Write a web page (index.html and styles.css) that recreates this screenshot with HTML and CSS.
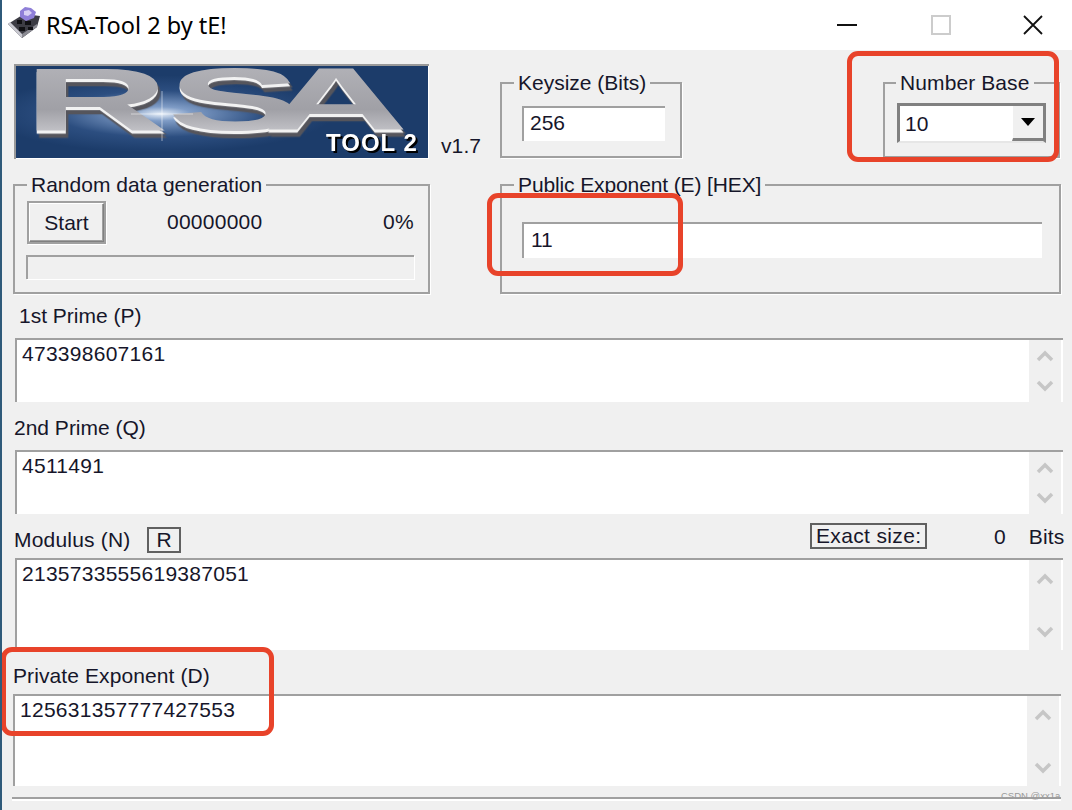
FILE: index.html
```html
<!DOCTYPE html>
<html lang="en">
  <head>
    <meta charset="UTF-8" />
    <meta name="viewport" content="width=device-width, initial-scale=1.0" />
    <title>RSA-Tool 2 by tE!</title>
    <link rel="stylesheet" href="styles.css">
  </head>
  <body>
    <div class="window">
      <header class="titlebar">
        <svg class="app-icon" viewBox="0 0 34 32" width="34" height="32">
          <polygon points="1,17 17,7 33,9 30,20 15,31" fill="#3c3c44" />
          <polygon points="1,17 15,31 15,27 3,15" fill="#c8c8d0" />
          <polygon points="15,31 30,20 30,17 15,27" fill="#8a8a92" />
          <polygon points="13,4 18,0 24,1 29,5 27,11 19,14 13,10" fill="#8f7fd8" />
          <polygon points="17,4 22,3 25,6 21,9 17,8" fill="#d8d0f4" />
          <g fill="#101014">
            <rect x="10" y="13" width="5" height="4" />
            <rect x="18" y="14" width="6" height="4" />
            <rect x="12" y="20" width="6" height="4" />
            <rect x="21" y="20" width="5" height="3" />
          </g>
        </svg>
        <span class="title">RSA-Tool 2 by tE!</span>
        <div class="controls">
          <svg width="22" height="20" viewBox="0 0 22 20"><path d="M1 10h20" stroke="#111" stroke-width="2" /></svg>
          <svg width="20" height="20" viewBox="0 0 20 20"><rect x="1" y="1" width="18" height="18" fill="none" stroke="#ccc" stroke-width="2" /></svg>
          <svg width="20" height="20" viewBox="0 0 20 20"><path d="M1 1l18 18M19 1L1 19" stroke="#111" stroke-width="1.8" /></svg>
        </div>
      </header>

      <main class="panel">
        <div class="row-top">
          <div class="logo">
            <svg viewBox="0 0 412 92" width="412" height="92">
              <defs>
                <radialGradient id="glow" cx="0.35" cy="0.52" r="0.42">
                  <stop offset="0" stop-color="#e6eef8" />
                  <stop offset="0.18" stop-color="#7f9cc6" />
                  <stop offset="0.6" stop-color="#2c4e80" />
                  <stop offset="1" stop-color="#1c3c6a" />
                </radialGradient>
                <linearGradient id="metal" x1="0" y1="0" x2="0" y2="1">
                  <stop offset="0" stop-color="#b8b8bd" />
                  <stop offset="0.6" stop-color="#a0a0a6" />
                  <stop offset="1" stop-color="#dcdce0" />
                </linearGradient>
              </defs>
              <rect width="412" height="92" fill="url(#glow)" />
              <text class="logo-rsa" x="3 63 103" y="61" transform="scale(2.4 1.05)" fill="url(#metal)">RSA</text>
              <path d="M146 25v50M115 48h62" stroke="#fff" stroke-opacity="0.5" />
              <text class="logo-tool" x="310" y="85" fill="#fff">TOOL 2</text>
            </svg>
          </div>
          <span class="version">v1.7</span>

          <fieldset class="group keysize">
            <legend>Keysize (Bits)</legend>
            <div class="group-body">
              <div class="edit">256</div>
            </div>
          </fieldset>

          <fieldset class="group numbase">
            <legend>Number Base</legend>
            <div class="group-body">
              <div class="combo">
                <span class="combo-value">10</span>
                <span class="combo-btn"><i></i></span>
              </div>
            </div>
          </fieldset>
        </div>

        <div class="row-mid">
          <fieldset class="group random">
            <legend>Random data generation</legend>
            <div class="group-body">
              <div class="random-line">
                <button class="btn-start">Start</button>
                <span class="counter">00000000</span>
                <span class="percent">0%</span>
              </div>
              <div class="progress"></div>
            </div>
          </fieldset>

          <fieldset class="group pubexp">
            <legend>Public Exponent (E) [HEX]</legend>
            <div class="group-body">
              <div class="edit">11</div>
            </div>
          </fieldset>
        </div>

        <div class="label prime-p">1st Prime (P)</div>
        <div class="memo short">
          <div class="memo-text">473398607161</div>
          <div class="scroll">
            <svg width="18" height="14" viewBox="0 0 18 14"><path d="M2 11l7-7 7 7" /></svg>
            <svg width="18" height="14" viewBox="0 0 18 14"><path d="M2 3l7 7 7-7" /></svg>
          </div>
        </div>

        <div class="label prime-q">2nd Prime (Q)</div>
        <div class="memo short">
          <div class="memo-text">4511491</div>
          <div class="scroll">
            <svg width="18" height="14" viewBox="0 0 18 14"><path d="M2 11l7-7 7 7" /></svg>
            <svg width="18" height="14" viewBox="0 0 18 14"><path d="M2 3l7 7 7-7" /></svg>
          </div>
        </div>

        <div class="modulus-row">
          <span class="modulus-label">Modulus (N)</span>
          <button class="btn-r">R</button>
          <span class="exact">Exact size:</span>
          <span class="exact-num">0</span>
          <span class="exact-unit">Bits</span>
        </div>
        <div class="memo tall">
          <div class="memo-text">2135733555619387051</div>
          <div class="scroll">
            <svg width="18" height="14" viewBox="0 0 18 14"><path d="M2 11l7-7 7 7" /></svg>
            <svg width="18" height="14" viewBox="0 0 18 14"><path d="M2 3l7 7 7-7" /></svg>
          </div>
        </div>

        <div class="label private-d">Private Exponent (D)</div>
        <div class="memo tall last">
          <div class="memo-text">125631357777427553</div>
          <div class="scroll">
            <svg width="18" height="14" viewBox="0 0 18 14"><path d="M2 11l7-7 7 7" /></svg>
            <svg width="18" height="14" viewBox="0 0 18 14"><path d="M2 3l7 7 7-7" /></svg>
          </div>
        </div>

        <div class="rule"></div>
      </main>

      <!-- red annotation boxes -->
      <div class="mark mark-base"></div>
      <div class="mark mark-pub"></div>
      <div class="mark mark-priv"></div>
      <div class="watermark">CSDN @xx1a</div>
    </div>
  </body>
</html>
```

FILE: styles.css
```css
* {
  margin: 0;
  padding: 0;
  box-sizing: border-box;
}
body,
html {
  width: 100%;
  height: 100%;
  overflow: hidden;
}
body {
  font-family: "Liberation Sans", Arial, sans-serif;
  font-size: 21px;
  color: #16162a;
}

.window {
  position: relative;
  width: 1072px;
  height: 810px;
  background: #f0f0f0;
  border-left: 2px solid #2f5a7a;
  overflow: hidden;
}

/* TITLE BAR */
.titlebar {
  height: 50px;
  background: #fff;
  display: flex;
  align-items: center;
  padding: 0 29px 0 5px;
}
.app-icon {
  margin-bottom: 5px;
}
.title {
  margin-left: 5px;
  font-family: "Noto Sans", sans-serif;
  font-size: 23.5px;
  color: #000;
}
.controls {
  margin-left: auto;
  display: flex;
  align-items: center;
  gap: 72.5px;
}

/* PANEL */
.panel {
  padding: 14px 0 0 12px;
}
.row-top {
  display: flex;
  align-items: flex-start;
  height: 95px;
}
.logo {
  width: 415px;
  height: 95px;
  border-top: 2px solid #999;
  border-left: 2px solid #999;
  background: #fff;
  flex: none;
}
.logo svg {
  display: block;
}
.logo-rsa {
  font-family: "Liberation Sans", sans-serif;
  font-weight: bold;
  font-size: 84px;
  filter: drop-shadow(0 3px 0 #f2f2f2) drop-shadow(1px 4px 0 #55555c);
}
.logo-tool {
  font-family: "Liberation Sans", sans-serif;
  font-weight: bold;
  font-size: 24px;
  letter-spacing: 1px;
  filter: drop-shadow(2px 2px 0 #000);
}
.version {
  margin: 70px 0 0 12px;
  width: 40px;
  flex: none;
  line-height: 24px;
  white-space: nowrap;
  letter-spacing: 0.1px;
}

/* GROUP BOXES */
.group {
  border: 2px solid #a0a0a0;
  box-shadow: 1px 1px 0 #fff;
  flex: none;
  min-width: 0;
}
.group legend {
  margin-left: 12px;
  padding: 0 4px;
  line-height: 24px;
  white-space: nowrap;
}
.keysize {
  margin: 7px 0 0 19px;
  width: 182px;
  height: 87px;
}
.keysize .group-body {
  padding: 11px 15px 0 20px;
}
.numbase {
  margin: 7px 0 0 201px;
  width: 177px;
  height: 87px;
}
.numbase .group-body {
  padding: 8px 12px 0 12px;
}
.numbase legend {
  margin-left: 11px;
  letter-spacing: 0.1px;
}
.edit {
  background: #fff;
  border-top: 2px solid #a0a0a0;
  border-left: 2px solid #a0a0a0;
  height: 35px;
  line-height: 30px;
  padding-left: 6px;
}
.combo {
  display: flex;
  height: 40px;
  background: #fff;
  border: 3px solid #808080;
  border-bottom: 2px solid #e6e6e6;
}
.combo-value {
  flex: 1;
  line-height: 36px;
  padding-left: 5px;
}
.combo-btn {
  width: 31px;
  background: #f0f0f0;
  display: flex;
  align-items: center;
  justify-content: center;
  border-left: 1px solid #fff;
  border-bottom: 3px solid #808080;
}
.combo-btn i {
  width: 0;
  height: 0;
  border-left: 7px solid transparent;
  border-right: 7px solid transparent;
  border-top: 8px solid #000;
}

.row-mid {
  display: flex;
  margin-top: 14px;
}
.random {
  margin-left: -1px;
  width: 417px;
  height: 121px;
}
.random .group-body {
  padding: 4px 14px 0 12px;
}
.random-line {
  display: flex;
  align-items: center;
  line-height: 22px;
}
.btn-start {
  width: 79px;
  height: 43px;
  background: #f0f0f0;
  border: 3px solid;
  border-color: #fff #808080 #808080 #fff;
  outline: 2px solid #a0a0a0;
  outline-offset: -2px;
  box-shadow: inset -1px -1px 0 #a0a0a0, 1px 1px 0 #fff;
  font: inherit;
  color: inherit;
}
.counter {
  margin-left: 61px;
  margin-top: -2px;
  letter-spacing: 0.25px;
}
.percent {
  margin-left: auto;
  margin-top: -2px;
  letter-spacing: 0.3px;
}
.progress {
  margin: 11px 0 0 -1px;
  height: 24px;
  border-top: 2px solid #a0a0a0;
  border-left: 2px solid #a0a0a0;
  box-shadow: 1px 1px 0 #fff;
}
.pubexp {
  margin-left: 70px;
  width: 561px;
  height: 121px;
}
.pubexp .group-body {
  padding: 25px 17px 0 20px;
}
.pubexp .edit {
  height: 36px;
  line-height: 32px;
  padding-left: 7px;
}
.pubexp legend {
  letter-spacing: -0.12px;
}

/* FIELD LABELS */
.label {
  line-height: 24px;
  height: 24px;
}
.prime-p {
  margin: 10px 0 10px 5px;
}
.prime-q {
  margin: 14px 0 10px 0;
}
.private-d {
  margin: 14px 0 6px -1px;
  letter-spacing: 0.1px;
}
.modulus-row {
  display: flex;
  align-items: center;
  height: 26px;
  margin: 13px 0 5px 0;
  position: relative;
}
.modulus-label {
  width: 133px;
  letter-spacing: 0.2px;
  white-space: nowrap;
}
.btn-r {
  width: 34px;
  height: 26px;
  border: 2px solid #606060;
  background: #f0f0f0;
  font: inherit;
  color: inherit;
  line-height: 20px;
}
.exact {
  margin-left: 629px;
  margin-top: -8px;
  width: 117px;
  height: 26px;
  line-height: 22px;
  border: 2px solid #606060;
  padding-left: 4px;
  white-space: nowrap;
  letter-spacing: 0.35px;
}
.exact-num {
  margin-left: 67px;
  margin-top: -6px;
}
.exact-unit {
  margin-left: 23px;
  margin-top: -6px;
  letter-spacing: 0.2px;
}

/* MEMO BOXES */
.memo {
  display: flex;
  width: 1048px;
  margin-left: 1px;
  background: #fff;
  border-top: 2px solid #a0a0a0;
  border-left: 2px solid #a0a0a0;
}
.memo.short {
  height: 64px;
}
.memo.tall {
  height: 92px;
}
.memo.last {
  margin-left: -1px;
}
.memo-text {
  flex: 1;
  padding-left: 5px;
  line-height: 28px;
  letter-spacing: 0.27px;
}
.scroll {
  width: 32px;
  margin: 0 2px 0 0;
  background: #f0f0f0;
  display: flex;
  flex-direction: column;
  align-items: center;
  justify-content: space-between;
  padding: 12px 0 11px;
}
.scroll path {
  fill: none;
  stroke: #c6c6c6;
  stroke-width: 3.5;
}
.memo.short .scroll {
  padding: 9px 0 9px;
}
.rule {
  margin: 11px 0 0 -2px;
  width: 1049px;
  height: 2px;
  background: #a0a0a0;
  box-shadow: 0 2px 0 #fff;
}

/* ANNOTATIONS */
.mark {
  position: absolute;
  border: 5px solid #e8432a;
  border-radius: 11px;
}
.mark-base {
  left: 845px;
  top: 51px;
  width: 212px;
  height: 111px;
}
.mark-pub {
  left: 485px;
  top: 193px;
  width: 196px;
  height: 83px;
}
.mark-priv {
  left: -1px;
  top: 647px;
  width: 273px;
  height: 89px;
}
.watermark {
  position: absolute;
  left: 999px;
  top: 790px;
  font-size: 9.5px;
  line-height: 12px;
  color: #9a9a9a;
  white-space: nowrap;
}
```
